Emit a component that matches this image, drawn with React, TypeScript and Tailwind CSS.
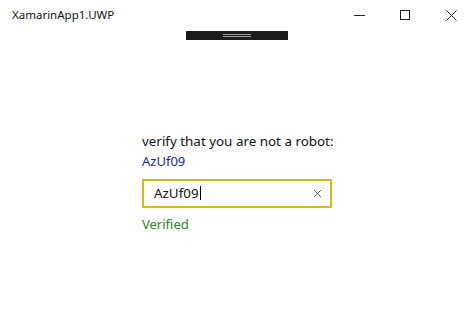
import { X } from 'lucide-react';

export default function App() {
  return (
    <div
      className="w-[474px] h-[333px] bg-white flex flex-col overflow-hidden text-black"
      style={{ fontFamily: '"Noto Sans", "Open Sans", sans-serif' }}
    >
      {/* Title bar */}
      <div className="h-[30px] flex items-center shrink-0 relative">
        <span className="pl-[12px] text-[11.5px] text-[#111]">XamarinApp1.UWP</span>
        <div className="ml-auto flex h-full items-center">
          <div className="w-[46px] h-full flex items-center justify-center">
            <div className="w-[11px] h-px bg-[#222]" />
          </div>
          <div className="w-[46px] h-full flex items-center justify-center">
            <div className="w-[10px] h-[10px] border border-[#222]" />
          </div>
          <div className="w-[46px] h-full flex items-center justify-center">
            <svg width="11" height="11" viewBox="0 0 11 11" fill="none" stroke="#222" strokeWidth="1">
              <path d="M0.5 0.5 L10.5 10.5 M10.5 0.5 L0.5 10.5" />
            </svg>
          </div>
        </div>
      </div>

      {/* Drag handle bar */}
      <div className="flex justify-center shrink-0 mt-[1px]">
        <div className="w-[102px] h-[9px] bg-[#1c1c1c] flex flex-col items-center justify-center gap-[1px]">
          <div className="w-[28px] h-px bg-[#9a9a9a]" />
          <div className="w-[28px] h-px bg-[#9a9a9a]" />
        </div>
      </div>

      {/* Content */}
      <div className="flex-1 flex items-center justify-center pb-[9px]">
        <div className="w-[190px] flex flex-col">
          <div className="text-[13.4px] leading-[20px] text-[#111] whitespace-nowrap">verify that you are not a robot:</div>
          <div className="text-[13px] leading-[20px] text-[#25259a]">AzUf09</div>
          <div className="mt-[8px] h-[29px] border-2 border-[#cdbb22] flex items-center pl-[10px] pr-[6px]">
            <span className="text-[13.4px] text-[#111]">AzUf09</span>
            <span className="w-px h-[14px] bg-black ml-[1px]" />
            <X className="ml-auto text-[#444]" size={13} strokeWidth={1.5} />
          </div>
          <div className="mt-[6px] text-[13px] leading-[20px] text-[#1d8a1d]">Verified</div>
        </div>
      </div>
    </div>
  );
}
